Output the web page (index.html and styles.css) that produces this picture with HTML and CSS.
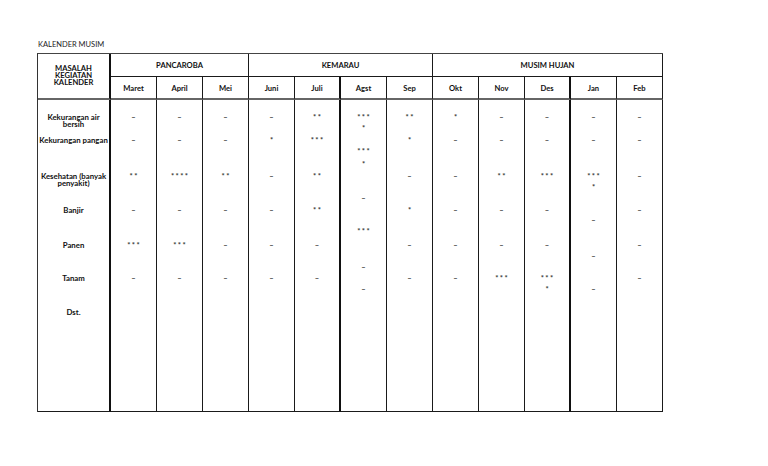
FILE: index.html
```html
<!DOCTYPE html>
<html lang="id">
<head>
<meta charset="utf-8">
<title>Kalender Musim</title>
<link rel="stylesheet" href="styles.css">
</head>
<body>
<div class="page">
  <div class="title">KALENDER MUSIM</div>
  <div class="cal">
    <div class="hd-label thick">
      <div class="ln">MASALAH</div>
      <div class="ln">KEGIATAN</div>
      <div class="ln">KALENDER</div>
    </div>
    <div class="hd-group g3">PANCAROBA</div>
    <div class="hd-group g4">KEMARAU</div>
    <div class="hd-group g5">MUSIM HUJAN</div>

    <div class="hd-month">Maret</div>
    <div class="hd-month">April</div>
    <div class="hd-month">Mei</div>
    <div class="hd-month">Juni</div>
    <div class="hd-month thick">Juli</div>
    <div class="hd-month">Agst</div>
    <div class="hd-month">Sep</div>
    <div class="hd-month">Okt</div>
    <div class="hd-month">Nov</div>
    <div class="hd-month thick">Des</div>
    <div class="hd-month">Jan</div>
    <div class="hd-month">Feb</div>

    <div class="col labels thick">
      <div class="r r1"><div class="ln">Kekurangan air</div><div class="ln">bersih</div></div>
      <div class="r r2"><div class="ln">Kekurangan pangan</div></div>
      <div class="r r3"><div class="ln">Kesehatan (banyak</div><div class="ln">penyakit)</div></div>
      <div class="r r4"><div class="ln">Banjir</div></div>
      <div class="r r5"><div class="ln">Panen</div></div>
      <div class="r r6"><div class="ln">Tanam</div></div>
      <div class="r r7"><div class="ln">Dst.</div></div>
    </div>

    <!-- Maret -->
    <div class="col vals">
      <div class="r r1">–</div><div class="r r2">–</div><div class="r r3">**</div>
      <div class="r r4">–</div><div class="r r5">***</div><div class="r r6">–</div><div class="r r7"></div>
    </div>
    <!-- April -->
    <div class="col vals">
      <div class="r r1">–</div><div class="r r2">–</div><div class="r r3">****</div>
      <div class="r r4">–</div><div class="r r5">***</div><div class="r r6">–</div><div class="r r7"></div>
    </div>
    <!-- Mei -->
    <div class="col vals">
      <div class="r r1">–</div><div class="r r2">–</div><div class="r r3">**</div>
      <div class="r r4">–</div><div class="r r5">–</div><div class="r r6">–</div><div class="r r7"></div>
    </div>
    <!-- Juni -->
    <div class="col vals">
      <div class="r r1">–</div><div class="r r2">*</div><div class="r r3">–</div>
      <div class="r r4">–</div><div class="r r5">–</div><div class="r r6">–</div><div class="r r7"></div>
    </div>
    <!-- Juli -->
    <div class="col vals thick">
      <div class="r r1">**</div><div class="r r2">***</div><div class="r r3">**</div>
      <div class="r r4">**</div><div class="r r5">–</div><div class="r r6">–</div><div class="r r7"></div>
    </div>
    <!-- Agst -->
    <div class="col vals">
      <div class="r r1"><div class="ln">***</div><div class="ln l2">*</div></div>
      <div class="r r2"><div class="ln off12">***</div><div class="ln l3">*</div></div>
      <div class="r r3"><div class="ln off22">–</div></div>
      <div class="r r4"><div class="ln off21">***</div></div>
      <div class="r r5"><div class="ln off22">–</div></div>
      <div class="r r6"><div class="ln off11">–</div></div>
      <div class="r r7"></div>
    </div>
    <!-- Sep -->
    <div class="col vals">
      <div class="r r1">**</div><div class="r r2">*</div><div class="r r3">–</div>
      <div class="r r4">*</div><div class="r r5">–</div><div class="r r6">–</div><div class="r r7"></div>
    </div>
    <!-- Okt -->
    <div class="col vals">
      <div class="r r1">*</div><div class="r r2">–</div><div class="r r3">–</div>
      <div class="r r4">–</div><div class="r r5">–</div><div class="r r6">–</div><div class="r r7"></div>
    </div>
    <!-- Nov -->
    <div class="col vals">
      <div class="r r1">–</div><div class="r r2">–</div><div class="r r3">**</div>
      <div class="r r4">–</div><div class="r r5">–</div><div class="r r6">***</div><div class="r r7"></div>
    </div>
    <!-- Des -->
    <div class="col vals thick">
      <div class="r r1">–</div><div class="r r2">–</div><div class="r r3">***</div>
      <div class="r r4">–</div><div class="r r5">–</div>
      <div class="r r6"><div class="ln">***</div><div class="ln l2">*</div></div>
      <div class="r r7"></div>
    </div>
    <!-- Jan -->
    <div class="col vals">
      <div class="r r1">–</div><div class="r r2">–</div>
      <div class="r r3"><div class="ln">***</div><div class="ln l2">*</div></div>
      <div class="r r4"><div class="ln off10">–</div></div>
      <div class="r r5"><div class="ln off11">–</div></div>
      <div class="r r6"><div class="ln off11">–</div></div>
      <div class="r r7"></div>
    </div>
    <!-- Feb -->
    <div class="col vals">
      <div class="r r1">–</div><div class="r r2">–</div><div class="r r3">–</div>
      <div class="r r4">–</div><div class="r r5">–</div><div class="r r6">–</div><div class="r r7"></div>
    </div>
  </div>
</div>
</body>
</html>
```
FILE: styles.css
```css
html, body {
  margin: 0;
  padding: 0;
  background: #ffffff;
}

body {
  font-family: Lato, "Liberation Sans", sans-serif;
  color: #111;
  width: 768px;
  height: 466px;
  overflow: hidden;
}

.page {
  padding: 41px 0 0 37px;
}

.title {
  font-size: 7.5px;
  line-height: 8px;
  padding-left: 1px;
  height: 12px;
  color: #222;
}

.cal {
  display: grid;
  grid-template-columns: 73px repeat(12, 46px);
  grid-template-rows: 23px 23px 312px;
  border-left: 1px solid #333;
  border-top: 1px solid #444;
  width: max-content;
}

.cal > div {
  box-sizing: border-box;
  border-right: 1px solid #1a1a1a;
  border-bottom: 1px solid #1a1a1a;
}

.cal > .thick {
  border-right: 2px solid #111;
}

.ln {
  height: 7.3px;
  line-height: 7.3px;
  white-space: nowrap;
}

.hd-label {
  grid-row: 1 / span 2;
  grid-column: 1;
  display: flex;
  flex-direction: column;
  align-items: center;
  justify-content: center;
  text-align: center;
  font-weight: 700;
  font-size: 7.6px;
  padding-bottom: 1px;
  border-bottom: 2px solid #666 !important;
}

.hd-group {
  display: flex;
  align-items: center;
  justify-content: center;
  font-weight: 700;
  font-size: 7.6px;
}

.g3 { grid-column: span 3; }
.g4 { grid-column: span 4; }
.g5 { grid-column: span 5; }

.hd-month {
  display: flex;
  align-items: center;
  justify-content: center;
  font-weight: 700;
  font-size: 7.6px;
  border-bottom: 2px solid #666 !important;
}

.col {
  display: flex;
  flex-direction: column;
  padding-top: 13.8px;
  text-align: center;
  font-weight: 700;
  font-size: 7.6px;
  line-height: 7.3px;
  color: #333;
}

.vals {
  letter-spacing: 1.3px;
  padding-left: 1.3px;
}

.labels {
  color: #111;
  font-size: 7.8px;
}

.col .r { flex: none; }
.r1 { height: 23px; }
.r2 { height: 35.8px; }
.r3 { height: 34.7px; }
.r4 { height: 34.4px; }
.r5 { height: 33px; }
.r6 { height: 34.5px; }
.r7 { flex: 1; }

.l2 { margin-top: 3.7px; }
.l3 { margin-top: 5.7px; }
.off10 { margin-top: 9.7px; }
.off11 { margin-top: 11.2px; }
.off12 { margin-top: 11.7px; }
.off21 { margin-top: 20.7px; }
.off22 { margin-top: 22.2px; }
```
